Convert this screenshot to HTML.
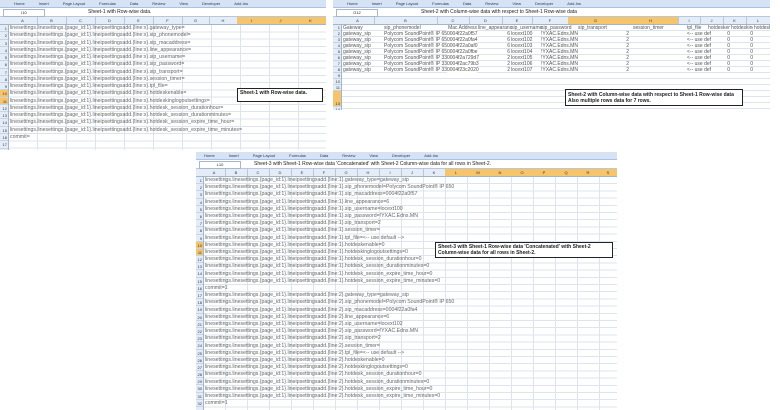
<!DOCTYPE html>
<html><head><meta charset="utf-8"><style>
body{margin:0;width:780px;height:410px;background:#fff;position:relative;overflow:hidden;font-family:"Liberation Sans",sans-serif;}
.p{position:absolute;overflow:hidden;background:#fff}
.rib{position:absolute;left:0;right:0;top:0;height:7px;background:#d5e3f5;border-bottom:1px solid #aac2e4;font-size:4px;color:#335;white-space:nowrap}
.rib span{margin-left:14px;line-height:7px}
.fb{position:absolute;left:0;right:0;top:8px;height:8px;background:#fff;border-bottom:1px solid #b8c8dc;font-size:5px;line-height:8px;white-space:nowrap;color:#222}
.nb{position:absolute;left:3px;top:1px;width:40px;height:6px;border:1px solid #a8b8cc;font-size:4px;line-height:6px;text-align:center}
.hd{position:absolute;left:0;right:0;height:7px;background:#e4ecf7;border-bottom:1px solid #9eb6ce;font-size:4px;line-height:7px;color:#334}
.hd i{position:absolute;top:0;font-style:normal;text-align:center;border-right:1px solid #b8c8dc;height:7px}
.hd i.o{background:#f6c46a}
.rn{position:absolute;left:0;width:8px;background:#e4ecf7;border-right:1px solid #9eb6ce;font-size:4px;color:#334}
.rn div{text-align:right;padding-right:1px;border-bottom:1px solid #c8d4e2;box-sizing:border-box}
.rn div.o{background:#f6c46a}
.g{position:absolute;right:0;bottom:0}
.t{position:absolute;font-size:5.2px;color:#666;white-space:nowrap;left:0}
.box{position:absolute;border:1.5px solid #222;background:#fff;font-size:5px;font-weight:bold;color:#222;padding:1px 2px;line-height:7px;box-sizing:border-box}
</style></head><body>

<!-- Panel 1 -->
<div class="p" style="left:0;top:0;width:326px;height:150px">
<div class="rib"><span>Home</span><span>Insert</span><span>Page Layout</span><span>Formulas</span><span>Data</span><span>Review</span><span>View</span><span>Developer</span><span>Add-Ins</span></div>
<div class="fb"><div class="nb">I10</div><span style="position:absolute;left:88px">Sheet-1 with Row-wise data.</span></div>
<div class="hd" style="top:17px">
<i style="left:8px;width:29px">A</i><i style="left:37px;width:29px">B</i><i style="left:66px;width:29px">C</i><i style="left:95px;width:29px">D</i><i style="left:124px;width:29px">E</i><i style="left:153px;width:29px">F</i><i style="left:182px;width:27px">G</i><i style="left:209px;width:28px">H</i><i class="o" style="left:237px;width:29px">I</i><i class="o" style="left:266px;width:29px">J</i><i class="o" style="left:295px;width:31px">K</i></div>
<div class="g" style="left:9px;top:25px;background:repeating-linear-gradient(to bottom,transparent 0 6.27px,#dde4ee 6.27px 7.27px),repeating-linear-gradient(to right,transparent 0 28px,#dde4ee 28px 29px)"></div>
<div class="rn" style="top:25px;height:125px;line-height:7.27px">
<div style="height:7.27px">1</div><div style="height:7.27px">2</div><div style="height:7.27px">3</div><div style="height:7.27px">4</div><div style="height:7.27px">5</div><div style="height:7.27px">6</div><div style="height:7.27px">7</div><div style="height:7.27px">8</div><div style="height:7.27px">9</div><div class="o" style="height:7.27px">10</div><div class="o" style="height:7.27px">11</div><div style="height:7.27px">12</div><div style="height:7.27px">13</div><div style="height:7.27px">14</div><div style="height:7.27px">15</div><div style="height:7.27px">16</div><div style="height:7.27px">17</div><div style="height:7.27px">18</div></div>
<div style="position:absolute;left:10px;top:25px;line-height:7.27px">
<div class="t" style="position:static">linesettings.linesettings.{page_id:1}.lineipsettingsadd.{line:x}.gateway_type=</div>
<div class="t" style="position:static">linesettings.linesettings.{page_id:1}.lineipsettingsadd.{line:x}.sip_phonemodel=</div>
<div class="t" style="position:static">linesettings.linesettings.{page_id:1}.lineipsettingsadd.{line:x}.sip_macaddress=</div>
<div class="t" style="position:static">linesettings.linesettings.{page_id:1}.lineipsettingsadd.{line:x}.line_appearance=</div>
<div class="t" style="position:static">linesettings.linesettings.{page_id:1}.lineipsettingsadd.{line:x}.sip_username=</div>
<div class="t" style="position:static">linesettings.linesettings.{page_id:1}.lineipsettingsadd.{line:x}.sip_password=</div>
<div class="t" style="position:static">linesettings.linesettings.{page_id:1}.lineipsettingsadd.{line:x}.sip_transport=</div>
<div class="t" style="position:static">linesettings.linesettings.{page_id:1}.lineipsettingsadd.{line:x}.session_timer=</div>
<div class="t" style="position:static">linesettings.linesettings.{page_id:1}.lineipsettingsadd.{line:x}.tpl_file=</div>
<div class="t" style="position:static">linesettings.linesettings.{page_id:1}.lineipsettingsadd.{line:x}.hotdeskenable=</div>
<div class="t" style="position:static">linesettings.linesettings.{page_id:1}.lineipsettingsadd.{line:x}.hotdeskinglogoutsettings=</div>
<div class="t" style="position:static">linesettings.linesettings.{page_id:1}.lineipsettingsadd.{line:x}.hotdesk_session_durationhour=</div>
<div class="t" style="position:static">linesettings.linesettings.{page_id:1}.lineipsettingsadd.{line:x}.hotdesk_session_durationminutes=</div>
<div class="t" style="position:static">linesettings.linesettings.{page_id:1}.lineipsettingsadd.{line:x}.hotdesk_session_expire_time_hour=</div>
<div class="t" style="position:static">linesettings.linesettings.{page_id:1}.lineipsettingsadd.{line:x}.hotdesk_session_expire_time_minutes=</div>
<div class="t" style="position:static">commit=</div></div>
<div class="box" style="left:237px;top:88px;width:86px;height:14px">Sheet-1 with Row-wise data.</div>
</div>

<!-- Panel 2 -->
<div class="p" style="left:333px;top:0;width:437px;height:110px">
<div class="rib"><span>Home</span><span>Insert</span><span>Page Layout</span><span>Formulas</span><span>Data</span><span>Review</span><span>View</span><span>Developer</span><span>Add-Ins</span></div>
<div class="fb"><div class="nb">G12</div><span style="position:absolute;left:88px">Sheet-2 with Column-wise data with respect to Sheet-1 Row-wise data</span></div>
<div class="hd" style="top:17px">
<i style="left:8px;width:33px">A</i><i style="left:41px;width:63px">B</i><i style="left:104px;width:32px">C</i><i style="left:136px;width:33px">D</i><i style="left:169px;width:30px">E</i><i style="left:199px;width:36px">F</i><i class="o" style="left:235px;width:55px">G</i><i class="o" style="left:290px;width:55px">H</i><i style="left:345px;width:22px">I</i><i style="left:367px;width:23px">J</i><i style="left:390px;width:23px">K</i><i style="left:413px;width:24px">L</i></div>
<div class="g" style="left:9px;top:25px;background:repeating-linear-gradient(to bottom,transparent 0 5px,#dde4ee 5px 6px)"></div>
<div class="rn" style="top:25px;height:85px;line-height:6px">
<div style="height:6px">1</div><div style="height:6px">2</div><div style="height:6px">3</div><div style="height:6px">4</div><div style="height:6px">5</div><div style="height:6px">6</div><div style="height:6px">7</div><div style="height:6px">8</div><div style="height:6px">9</div><div style="height:6px">10</div><div style="height:6px">11</div><div class="o" style="height:16px;line-height:26px">13</div><div style="height:6px">14</div></div>
<div style="position:absolute;left:8px;top:25px;font-size:5px;color:#555;line-height:6px;white-space:nowrap">
<div style="position:absolute;left:2px">Gateway<br>gateway_sip<br>gateway_sip<br>gateway_sip<br>gateway_sip<br>gateway_sip<br>gateway_sip<br>gateway_sip</div>
<div style="position:absolute;left:43px">sip_phonemodel<br>Polycom SoundPoint® IP 65<br>Polycom SoundPoint® IP 65<br>Polycom SoundPoint® IP 65<br>Polycom SoundPoint® IP 65<br>Polycom SoundPoint® IP 33<br>Polycom SoundPoint® IP 33<br>Polycom SoundPoint® IP 33</div>
<div style="position:absolute;left:106px;width:30px;text-align:right;background:#fff">Mac Address<br>0004f22a0f57<br>0004f22a0fa4<br>0004f22a0af0<br>0004f22a0fbe<br>0004f2a729d7<br>0004f2ac79b3<br>0004f23c2020</div>
<div style="position:absolute;left:137px;width:32px;text-align:right">line_appearanc<br>6<br>6<br>6<br>6<br>2<br>2<br>2</div>
<div style="position:absolute;left:170px">sip_username<br>locext100<br>locext102<br>locext103<br>locext104<br>locext105<br>locext106<br>locext107</div>
<div style="position:absolute;left:200px">sip_password<br>!YXAC.Edns.MN<br>!YXAC.Edns.MN<br>!YXAC.Edns.MN<br>!YXAC.Edns.MN<br>!YXAC.Edns.MN<br>!YXAC.Edns.MN<br>!YXAC.Edns.MN</div>
<div style="position:absolute;left:237px;width:53px">sip_transport</div>
<div style="position:absolute;left:236px;width:52px;text-align:right"><br>2<br>2<br>2<br>2<br>2<br>2<br>2</div>
<div style="position:absolute;left:292px">session_timer</div>
<div style="position:absolute;left:346px">tpl_file<br>&lt;-- use def<br>&lt;-- use def<br>&lt;-- use def<br>&lt;-- use def<br>&lt;-- use def<br>&lt;-- use def<br>&lt;-- use def</div>
<div style="position:absolute;left:367px;width:22px;text-align:right;overflow:hidden">hotdeskena<br>0<br>0<br>0<br>0<br>0<br>0<br>0</div>
<div style="position:absolute;left:390px;width:22px;text-align:right;overflow:hidden">hotdesking<br>0<br>0<br>0<br>0<br>0<br>0<br>0</div>
<div style="position:absolute;left:413px;width:22px;text-align:right;overflow:hidden">hotdesk_s<br>0<br>0<br>0<br>0<br>0<br>0<br>0</div>
</div>
<div class="box" style="left:232px;top:89px;width:178px;height:17px;line-height:6px;padding-top:2px">Sheet-2 with Column-wise data with respect to Sheet-1 Row-wise data<br>Also multiple rows data for 7 rows.</div>
</div>

<!-- Panel 3 -->
<div class="p" style="left:196px;top:152px;width:421px;height:258px">
<div class="rib"><span style="margin-left:8px">Home</span><span>Insert</span><span>Page Layout</span><span>Formulas</span><span>Data</span><span>Review</span><span>View</span><span>Developer</span><span>Add-Ins</span></div>
<div class="fb"><div class="nb">L10</div><span style="position:absolute;left:58px">Sheet-3 with Sheet-1 Row-wise data 'Concatenated' with Sheet-2 Column-wise data for all rows in Sheet-2.</span></div>
<div class="hd" style="top:17px">
<i style="left:7px;width:22px">A</i><i style="left:29px;width:22px">B</i><i style="left:51px;width:22px">C</i><i style="left:73px;width:22px">D</i><i style="left:95px;width:22px">E</i><i style="left:117px;width:22px">F</i><i style="left:139px;width:22px">G</i><i style="left:161px;width:22px">H</i><i style="left:183px;width:22px">I</i><i style="left:205px;width:22px">J</i><i style="left:227px;width:22px">K</i><i class="o" style="left:249px;width:22px">L</i><i class="o" style="left:271px;width:22px">M</i><i class="o" style="left:293px;width:22px">N</i><i class="o" style="left:315px;width:22px">O</i><i class="o" style="left:337px;width:22px">P</i><i class="o" style="left:359px;width:22px">Q</i><i class="o" style="left:381px;width:22px">R</i><i class="o" style="left:403px;width:18px">S</i></div>
<div class="g" style="left:8px;top:25px;background:repeating-linear-gradient(to bottom,transparent 0 6.2px,#dde4ee 6.2px 7.2px),repeating-linear-gradient(to right,transparent 0 21px,#dde4ee 21px 22px)"></div>
<div class="rn" style="top:25px;height:233px;line-height:7.2px;width:7px">
<div style="height:7.2px">1</div><div style="height:7.2px">2</div><div style="height:7.2px">3</div><div style="height:7.2px">4</div><div style="height:7.2px">5</div><div style="height:7.2px">6</div><div style="height:7.2px">7</div><div style="height:7.2px">8</div><div style="height:7.2px">9</div><div class="o" style="height:7.2px">10</div><div class="o" style="height:7.2px">11</div><div style="height:7.2px">12</div><div style="height:7.2px">13</div><div style="height:7.2px">14</div><div style="height:7.2px">15</div><div style="height:7.2px">16</div><div style="height:7.2px">17</div><div style="height:7.2px">18</div><div style="height:7.2px">19</div><div style="height:7.2px">20</div><div style="height:7.2px">21</div><div style="height:7.2px">22</div><div style="height:7.2px">23</div><div style="height:7.2px">24</div><div style="height:7.2px">25</div><div style="height:7.2px">26</div><div style="height:7.2px">27</div><div style="height:7.2px">28</div><div style="height:7.2px">29</div><div style="height:7.2px">30</div><div style="height:7.2px">31</div><div style="height:7.2px">32</div></div>
<div style="position:absolute;left:9px;top:25px;line-height:7.2px;font-size:5.2px;color:#666;white-space:nowrap">
linesettings.linesettings.{page_id:1}.lineipsettingsadd.{line:1}.gateway_type=gateway_sip<br>
linesettings.linesettings.{page_id:1}.lineipsettingsadd.{line:1}.sip_phonemodel=Polycom SoundPoint® IP 650<br>
linesettings.linesettings.{page_id:1}.lineipsettingsadd.{line:1}.sip_macaddress=0004f22a0f57<br>
linesettings.linesettings.{page_id:1}.lineipsettingsadd.{line:1}.line_appearance=6<br>
linesettings.linesettings.{page_id:1}.lineipsettingsadd.{line:1}.sip_username=locext100<br>
linesettings.linesettings.{page_id:1}.lineipsettingsadd.{line:1}.sip_password=!YXAC.Edns.MN<br>
linesettings.linesettings.{page_id:1}.lineipsettingsadd.{line:1}.sip_transport=2<br>
linesettings.linesettings.{page_id:1}.lineipsettingsadd.{line:1}.session_timer=<br>
linesettings.linesettings.{page_id:1}.lineipsettingsadd.{line:1}.tpl_file=&lt;-- use default --&gt;<br>
linesettings.linesettings.{page_id:1}.lineipsettingsadd.{line:1}.hotdeskenable=0<br>
linesettings.linesettings.{page_id:1}.lineipsettingsadd.{line:1}.hotdeskinglogoutsettings=0<br>
linesettings.linesettings.{page_id:1}.lineipsettingsadd.{line:1}.hotdesk_session_durationhour=0<br>
linesettings.linesettings.{page_id:1}.lineipsettingsadd.{line:1}.hotdesk_session_durationminutes=0<br>
linesettings.linesettings.{page_id:1}.lineipsettingsadd.{line:1}.hotdesk_session_expire_time_hour=0<br>
linesettings.linesettings.{page_id:1}.lineipsettingsadd.{line:1}.hotdesk_session_expire_time_minutes=0<br>
commit=1<br>
linesettings.linesettings.{page_id:1}.lineipsettingsadd.{line:2}.gateway_type=gateway_sip<br>
linesettings.linesettings.{page_id:1}.lineipsettingsadd.{line:2}.sip_phonemodel=Polycom SoundPoint® IP 650<br>
linesettings.linesettings.{page_id:1}.lineipsettingsadd.{line:2}.sip_macaddress=0004f22a0fa4<br>
linesettings.linesettings.{page_id:1}.lineipsettingsadd.{line:2}.line_appearance=6<br>
linesettings.linesettings.{page_id:1}.lineipsettingsadd.{line:2}.sip_username=locext102<br>
linesettings.linesettings.{page_id:1}.lineipsettingsadd.{line:2}.sip_password=!YXAC.Edns.MN<br>
linesettings.linesettings.{page_id:1}.lineipsettingsadd.{line:2}.sip_transport=2<br>
linesettings.linesettings.{page_id:1}.lineipsettingsadd.{line:2}.session_timer=<br>
linesettings.linesettings.{page_id:1}.lineipsettingsadd.{line:2}.tpl_file=&lt;-- use default --&gt;<br>
linesettings.linesettings.{page_id:1}.lineipsettingsadd.{line:2}.hotdeskenable=0<br>
linesettings.linesettings.{page_id:1}.lineipsettingsadd.{line:2}.hotdeskinglogoutsettings=0<br>
linesettings.linesettings.{page_id:1}.lineipsettingsadd.{line:2}.hotdesk_session_durationhour=0<br>
linesettings.linesettings.{page_id:1}.lineipsettingsadd.{line:2}.hotdesk_session_durationminutes=0<br>
linesettings.linesettings.{page_id:1}.lineipsettingsadd.{line:2}.hotdesk_session_expire_time_hour=0<br>
linesettings.linesettings.{page_id:1}.lineipsettingsadd.{line:2}.hotdesk_session_expire_time_minutes=0<br>
commit=1</div>
<div class="box" style="left:239px;top:90px;width:178px;height:16px;line-height:6px;padding-top:1px">Sheet-3 with Sheet-1 Row-wise data 'Concatenated' with Sheet-2 Column-wise data for all rows in Sheet-2.</div>
</div>
</body></html>
